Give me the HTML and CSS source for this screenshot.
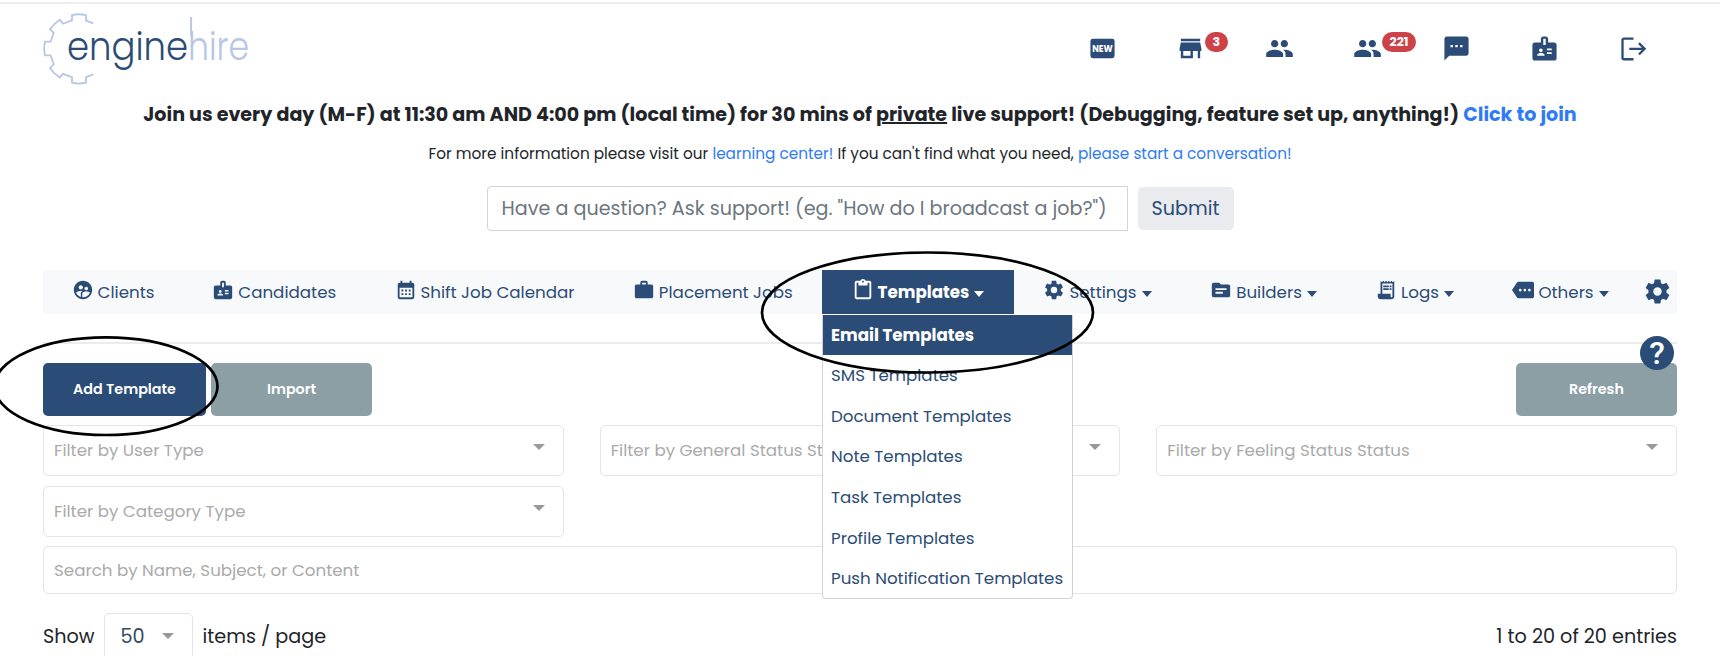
FILE: index.html
```
<!DOCTYPE html>
<html lang="en">
<head>
    <meta charset="UTF-8">
    <meta name="viewport" content="width=device-width, initial-scale=1.0">
    <title>Enginehire - Email Templates</title>
    <link rel="stylesheet" href="styles.css">
</head>
<body>
    <!-- Shared icons -->
    <svg class="sprite">
        <symbol id="people" viewBox="0 0 24 24"><path d="M16 11c1.66 0 2.99-1.34 2.99-3S17.66 5 16 5s-3 1.34-3 3 1.34 3 3 3zm-8 0c1.66 0 2.99-1.34 2.99-3S9.66 5 8 5 5 6.34 5 8s1.34 3 3 3zm0 2c-2.33 0-7 1.17-7 3.5V19h14v-2.5c0-2.33-4.67-3.5-7-3.5zm8 0c-.29 0-.62.02-.97.05 1.16.84 1.97 1.97 1.97 3.45V19h6v-2.5c0-2.33-4.67-3.5-7-3.5z"/></symbol>
        <symbol id="badge" viewBox="0 0 24 24"><path d="M20 7h-5V4c0-1.1-.9-2-2-2h-2c-1.1 0-2 .9-2 2v3H4c-1.1 0-2 .9-2 2v11c0 1.1.9 2 2 2h16c1.1 0 2-.9 2-2V9c0-1.1-.9-2-2-2zM9 12c.83 0 1.5.67 1.5 1.5S9.83 15 9 15s-1.5-.67-1.5-1.5S8.17 12 9 12zm3 6H6v-.75c0-1 2-1.5 3-1.5s3 .5 3 1.5V18zm1-9h-2V4h2v5zm5 7.5h-4V15h4v1.5zm0-3h-4V12h4v1.5z"/></symbol>
        <symbol id="cog" viewBox="0 0 24 24"><path d="M12 15.5A3.5 3.5 0 0 1 8.5 12 3.5 3.5 0 0 1 12 8.5a3.5 3.5 0 0 1 3.5 3.5 3.5 3.5 0 0 1-3.5 3.5m7.43-2.53c.04-.32.07-.64.07-.97s-.03-.66-.07-1l2.11-1.63c.19-.15.24-.42.12-.64l-2-3.46c-.12-.22-.39-.31-.61-.22l-2.49 1c-.52-.39-1.06-.73-1.69-.98l-.37-2.65A.506.506 0 0 0 14 2h-4c-.25 0-.46.18-.5.42l-.37 2.65c-.63.25-1.17.59-1.69.98l-2.49-1c-.22-.09-.49 0-.61.22l-2 3.46c-.13.22-.07.49.12.64L4.57 11c-.04.34-.07.67-.07 1s.03.65.07.97l-2.11 1.66c-.19.15-.25.42-.12.64l2 3.46c.12.22.39.3.61.22l2.49-1.01c.52.4 1.06.74 1.69.99l.37 2.65c.04.24.25.42.5.42h4c.25 0 .46-.18.5-.42l.37-2.65c.63-.26 1.17-.59 1.69-.99l2.49 1.01c.22.08.49 0 .61-.22l2-3.46c.12-.22.07-.49-.12-.64z"/></symbol>
    </svg>

    <!-- Header -->
    <header class="header">
        <svg class="logo" width="230" height="80" viewBox="40 9 230 80">
            <path class="logo-gear" d="M93.3 23.4L86 20.6V15.2Q79 13.4 72 15v5.4L63 23.8 59.8 19.8Q54 23.8 50 29.2L53.7 33 50.6 41.6H45Q43.2 48.5 44.8 55.4H50.6L53.7 64 50 68.3Q54 73.8 59.8 77.6L63 73.8 72 77.2V82.7Q79 84.4 86 82.7V77.2L93.3 74.4"/>
            <text class="logo-engine" x="67" y="59.5" textLength="121" lengthAdjust="spacingAndGlyphs">engine</text>
            <text class="logo-hire" x="188" y="59.5" textLength="61" lengthAdjust="spacingAndGlyphs">hire</text>
            <path class="logo-stem" d="M191.1 17V36"/>
        </svg>
        <div class="header-icons">
            <a href="#"><svg viewBox="0 0 24 24"><rect x="2" y="4" width="20" height="16" rx="2"/><text class="new-label" x="12" y="14.9" textLength="17" lengthAdjust="spacingAndGlyphs">NEW</text></svg></a>
            <a href="#"><svg viewBox="0 0 24 24"><path d="M12 18H6v-4h6m9 0v-2l-1-5H4l-1 5v2h1v6h10v-6h4v6h2v-6m0-10H4v2h16z"/></svg><span class="count">3</span></a>
            <a href="#"><svg><use href="#people"/></svg></a>
            <a href="#"><svg><use href="#people"/></svg><span class="count">221</span></a>
            <a href="#"><svg viewBox="0 0 24 24"><path d="M20 2H4c-1.1 0-1.99.9-1.99 2L2 22l4-4h14c1.1 0 2-.9 2-2V4c0-1.1-.9-2-2-2zM9 11H7V9h2v2zm4 0h-2V9h2v2zm4 0h-2V9h2v2z"/></svg></a>
            <a href="#"><svg><use href="#badge"/></svg></a>
            <a href="#"><svg class="outline" viewBox="0 0 24 24"><path d="M12 3.9H4.1Q2.9 3.9 2.9 5.1V19.7Q2.9 20.9 4.1 20.9H12M8.5 12.3H21M16.5 7.6L21.2 12.3 16.5 17"/></svg></a>
        </div>
    </header>

    <!-- Support -->
    <h1 class="headline">Join us every day (M-F) at 11:30 am AND 4:00 pm (local time) for 30 mins of <u>private</u> live support! (Debugging, feature set up, anything!) <a href="#">Click to join</a></h1>
    <p class="info">For more information please visit our <a href="#">learning center!</a> If you can't find what you need, <a href="#">please start a conversation!</a></p>
    <form class="ask">
        <input type="text" placeholder="Have a question? Ask support! (eg. &quot;How do I broadcast a job?&quot;)">
        <button type="button">Submit</button>
    </form>

    <!-- Navigation -->
    <nav class="nav">
        <a href="#"><svg viewBox="0 0 24 24"><path d="M11.99 2c-5.52 0-10 4.48-10 10s4.48 10 10 10 10-4.48 10-10-4.48-10-10-10zm3.61 6.34c1.07 0 1.93.86 1.93 1.93 0 1.07-.86 1.93-1.93 1.93-1.07 0-1.93-.86-1.93-1.93-.01-1.07.86-1.93 1.93-1.93zm-6-1.58c1.3 0 2.36 1.06 2.36 2.36 0 1.3-1.06 2.36-2.36 2.36s-2.36-1.06-2.36-2.36c0-1.31 1.05-2.36 2.36-2.36zm0 9.13v3.75c-2.4-.75-4.3-2.6-5.14-4.96 1.05-1.12 3.67-1.69 5.14-1.69.53 0 1.2.08 1.9.22-1.64.87-1.9 2.02-1.9 2.68zM11.99 20c-.27 0-.53-.01-.79-.04v-4.07c0-1.42 2.94-2.13 4.4-2.13 1.07 0 2.92.39 3.84 1.15-1.17 2.97-4.06 5.09-7.45 5.09z"/></svg>Clients</a>
        <a href="#"><svg><use href="#badge"/></svg>Candidates</a>
        <a href="#"><svg viewBox="0 0 24 24"><path fill-rule="evenodd" d="M19 4h-1V2h-2v2H8V2H6v2H5c-1.1 0-2 .9-2 2v14c0 1.1.9 2 2 2h14c1.1 0 2-.9 2-2V6c0-1.1-.9-2-2-2zM5 20V9.5h14V20zM7 11.5h2v2H7zm4 0h2v2h-2zm4 0h2v2h-2zM7 15.5h2v2H7zm4 0h2v2h-2zm4 0h2v2h-2z"/></svg>Shift Job Calendar</a>
        <a href="#"><svg viewBox="0 0 24 24"><path d="M20 6h-4V4c0-1.11-.89-2-2-2h-4c-1.11 0-2 .89-2 2v2H4c-1.11 0-1.99.89-1.99 2L2 19c0 1.11.89 2 2 2h16c1.11 0 2-.89 2-2V8c0-1.11-.89-2-2-2zm-6 0h-4V4h4v2z"/></svg>Placement Jobs</a>
        <div class="dropdown">
            <a href="#" class="active"><svg viewBox="0 0 24 24"><path d="M19 2h-4.18C14.4.84 13.3 0 12 0S9.6.84 9.18 2H5c-1.1 0-2 .9-2 2v16c0 1.1.9 2 2 2h14c1.1 0 2-.9 2-2V4c0-1.1-.9-2-2-2zm-7 0c.55 0 1 .45 1 1s-.45 1-1 1-1-.45-1-1 .45-1 1-1zm7 18H5V4h2v3h10V4h2v16z"/></svg>Templates<i class="caret"></i></a>
            <div class="menu">
                <a href="#" class="active">Email Templates</a>
                <a href="#">SMS Templates</a>
                <a href="#">Document Templates</a>
                <a href="#">Note Templates</a>
                <a href="#">Task Templates</a>
                <a href="#">Profile Templates</a>
                <a href="#">Push Notification Templates</a>
            </div>
        </div>
        <a href="#"><svg><use href="#cog"/></svg>Settings<i class="caret"></i></a>
        <a href="#"><svg viewBox="0 0 24 24"><path d="M20 6h-8l-2-2H4c-1.1 0-1.99.9-1.99 2L2 18c0 1.1.9 2 2 2h16c1.1 0 2-.9 2-2V8c0-1.1-.9-2-2-2zm-6 10H6v-2h8v2zm4-4H6v-2h12v2z"/></svg>Builders<i class="caret"></i></a>
        <a href="#"><svg viewBox="0 0 24 24"><path d="M19.5 3.5L18 2l-1.5 1.5L15 2l-1.5 1.5L12 2l-1.5 1.5L9 2 7.5 3.5 6 2v14H3v3c0 1.66 1.34 3 3 3h12c1.66 0 3-1.34 3-3V2l-1.5 1.5zM19 19c0 .55-.45 1-1 1s-1-.45-1-1v-3H8V5h11v14z"/><path d="M9 7h6v2H9zM16 7h2v2h-2zM9 10h6v2H9zM16 10h2v2h-2z"/></svg>Logs<i class="caret"></i></a>
        <a href="#"><svg viewBox="0 0 24 24"><path d="M22 3H7c-.69 0-1.23.35-1.59.88L0 12l5.41 8.11c.36.53.97.89 1.66.89H22c1.1 0 2-.9 2-2V5c0-1.1-.9-2-2-2zM9 13.5c-.83 0-1.5-.67-1.5-1.5s.67-1.5 1.5-1.5 1.5.67 1.5 1.5-.67 1.5-1.5 1.5zm5 0c-.83 0-1.5-.67-1.5-1.5s.67-1.5 1.5-1.5 1.5.67 1.5 1.5-.67 1.5-1.5 1.5zm5 0c-.83 0-1.5-.67-1.5-1.5s.67-1.5 1.5-1.5 1.5.67 1.5 1.5-.67 1.5-1.5 1.5z"/></svg>Others<i class="caret"></i></a>
        <a href="#" class="nav-cog"><svg><use href="#cog"/></svg></a>
    </nav>

    <!-- Templates list -->
    <main class="content">
        <div class="actions">
            <button class="btn btn-primary">Add Template</button>
            <button class="btn">Import</button>
            <button class="btn btn-refresh">Refresh</button>
            <span class="help">?</span>
        </div>
        <div class="filters">
            <div class="select">Filter by User Type<i class="arrow"></i></div>
            <div class="select">Filter by General Status Status<i class="arrow"></i></div>
            <div class="select">Filter by Feeling Status Status<i class="arrow"></i></div>
            <div class="select">Filter by Category Type<i class="arrow"></i></div>
        </div>
        <input class="search" type="text" placeholder="Search by Name, Subject, or Content">
        <div class="paging">
            <span>Show</span>
            <div class="page-size">50<i class="arrow"></i></div>
            <span>items / page</span>
            <span class="entries">1 to 20 of 20 entries</span>
        </div>
    </main>

    <!-- Hand drawn circles over the page -->
    <svg class="marks" width="1720" height="656">
        <ellipse cx="106" cy="386.2" rx="111.5" ry="48.8"/>
        <ellipse cx="927.5" cy="312.5" rx="165.5" ry="60"/>
    </svg>
</body>
</html>
```
FILE: styles.css
```
* {
    box-sizing: border-box;
}
body {
    margin: 0;
    height: 656px;
    padding: 0 43px;
    overflow: hidden;
    position: relative;
    border-top: 2px solid #fff;
    background: #fff;
    color: #212529;
    font-family: Poppins, Inter, sans-serif;
}
a {
    color: #2f7bf6;
    text-decoration: none;
}
button, input {
    font-family: inherit;
}
svg {
    flex: none;
    fill: #2b4c76;
}
.sprite {
    position: absolute;
    width: 0;
    height: 0;
}

/* Header */
.header {
    display: flex;
    justify-content: space-between;
    height: 94px;
    margin: 0 -43px;
    padding: 0 42.5px 0 40px;
    border-top: 2px solid #ececec;
}
.logo {
    margin-top: 5px;
}
.logo-gear, .logo-stem {
    fill: none;
    stroke: #b7c6e6;
    stroke-width: 1.8;
}
.logo-stem {
    stroke-width: 2;
}
.logo text {
    font-size: 39px;
    font-weight: 300;
}
.logo-engine {
    fill: #2b4c76;
}
.logo .logo-hire {
    fill: #b7c6e6;
}
.header-icons {
    display: flex;
    height: 88px;
}
.header-icons a {
    position: relative;
    display: flex;
    align-items: center;
    justify-content: center;
    width: 88.5px;
}
.header-icons svg {
    width: 29px;
    height: 29px;
}
.header-icons .outline {
    fill: none;
    stroke: #2b4c76;
    stroke-width: 1.9;
}
.new-label {
    fill: #fff;
    font-size: 8px;
    font-weight: 700;
    text-anchor: middle;
}
.count {
    position: absolute;
    top: 28px;
    left: 58px;
    padding: 0 8px;
    border-radius: 10px;
    background: #cd4249;
    color: #fff;
    font-size: 12.5px;
    font-weight: 700;
    line-height: 20px;
}

/* Support */
.headline {
    margin: 0;
    padding-top: 4px;
    font-size: 19.1px;
    font-weight: 700;
    line-height: 30px;
    text-align: center;
    white-space: nowrap;
}
.headline u {
    text-decoration-thickness: 2px;
}
.info {
    margin: 12px 0 0;
    font-size: 15.3px;
    line-height: 24px;
    text-align: center;
}
.ask {
    display: flex;
    justify-content: center;
    align-items: center;
    gap: 10px;
    margin-top: 20px;
}
.ask input {
    width: 641px;
    height: 45px;
    padding: 0 14px;
    border: 1px solid #ced4da;
    border-radius: 4px 0 0 4px;
    font-size: 19.15px;
}
.ask input::placeholder {
    color: #6c757d;
}
.ask button {
    width: 96px;
    height: 43px;
    border: none;
    border-radius: 5px;
    background: #e9ebef;
    color: #2b4c76;
    font-size: 19.15px;
}

/* Navigation */
.nav {
    display: grid;
    grid-template-columns: 140px 182.5px 238px 218.5px 192px 167px 165px 137px 155px 39px;
    height: 44px;
    margin-top: 38.5px;
    background: #f8f9fb;
}
.nav a {
    display: flex;
    align-items: center;
    color: #2b4c76;
    font-size: 16.7px;
    white-space: nowrap;
}
.nav > a, .dropdown > a {
    justify-content: center;
    gap: 4px;
    height: 44px;
}
.nav > a svg, .dropdown > a svg {
    width: 22px;
    height: 22px;
    margin-top: -3px;
}
.nav a.active {
    background: #2b4c76;
    color: #fff;
    font-weight: 700;
}
.active svg {
    fill: #fff;
}
.caret {
    margin: 5px 0 0 1px;
    border: 5px solid transparent;
    border-top: 6px solid;
    border-bottom: 0;
}
.nav .nav-cog svg {
    width: 29px;
    height: 29px;
    margin-top: 0;
}
.dropdown {
    position: relative;
}
.menu {
    position: absolute;
    z-index: 2;
    top: 45px;
    left: 0;
    width: 251px;
    border: 1px solid #d0d2d5;
    border-top: 0;
    border-radius: 0 0 4px 4px;
    background: #fff;
}
.menu a {
    height: 40.55px;
    padding-left: 8px;
}

/* Templates list */
.content {
    margin-top: 28px;
    border-top: 2px solid #ececec;
}
.actions {
    position: relative;
    display: flex;
    gap: 5px;
    margin-top: 19px;
}
.btn {
    width: 161px;
    height: 53px;
    border: none;
    border-radius: 5px;
    background: #8b9fa5;
    color: #fff;
    font-size: 14.3px;
    font-weight: 600;
}
.btn-primary {
    width: 163px;
    background: #2b4c76;
}
.btn-refresh {
    margin-left: auto;
}
.help {
    position: absolute;
    top: -27px;
    right: 3px;
    width: 34px;
    height: 34px;
    border-radius: 50%;
    background: #2b4c76;
    color: #fff;
    font-family: Roboto, sans-serif;
    font-size: 32px;
    font-weight: 500;
    line-height: 35px;
    text-align: center;
}
.filters {
    display: grid;
    grid-template-columns: repeat(3, 1fr);
    gap: 10px 36px;
    margin-top: 9px;
}
.select, .search {
    height: 51px;
    padding: 0 18px 0 10px;
    border: 1px solid #e4e4e4;
    border-radius: 5px;
    color: #aaa;
    font-size: 16.7px;
}
.select {
    display: flex;
    align-items: center;
    justify-content: space-between;
}
.arrow {
    margin-top: -6px;
    border: 6px solid transparent;
    border-top: 6px solid #999;
    border-bottom: 0;
}
.search {
    display: block;
    width: 100%;
    height: 48px;
    margin-top: 9px;
}
.search::placeholder {
    color: #aaa;
}
.paging {
    display: flex;
    align-items: center;
    height: 48px;
    margin-top: 19px;
    font-size: 19.2px;
}
.page-size {
    display: flex;
    align-items: center;
    justify-content: space-between;
    width: 89px;
    height: 48px;
    margin: 0 10px 0 9px;
    padding: 0 18px 0 16px;
    border: 1px solid #e4e4e4;
    border-radius: 5px;
    color: #34495e;
    font-size: 19.2px;
}
.page-size .arrow {
    margin-top: -2px;
}
.entries {
    margin-left: auto;
}

.marks {
    position: absolute;
    z-index: 5;
    top: -2px;
    left: 0;
    fill: none;
    stroke: #000;
    stroke-width: 2.7;
    pointer-events: none;
}
```
